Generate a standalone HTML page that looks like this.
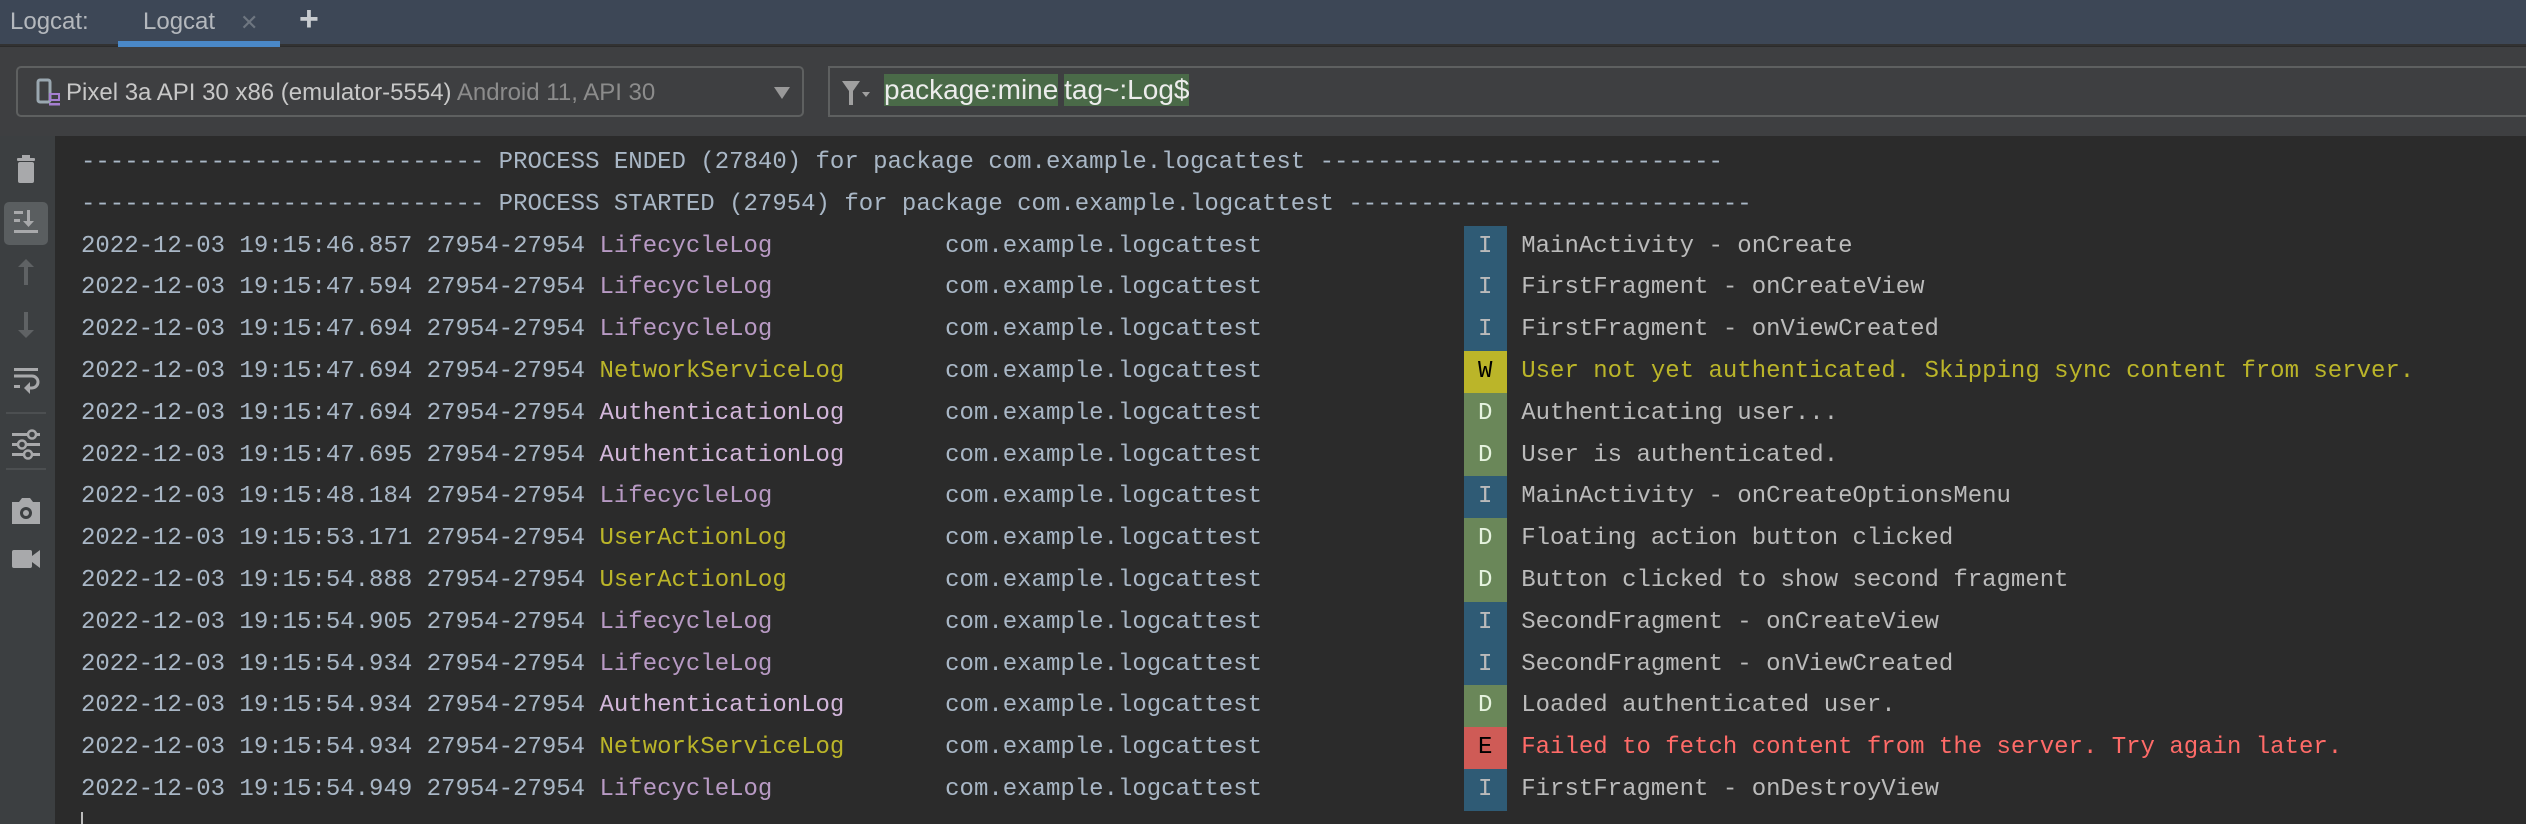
<!DOCTYPE html>
<html><head><meta charset="utf-8"><style>
*{margin:0;padding:0;box-sizing:border-box}
html,body{width:2526px;height:824px;overflow:hidden}
body{background:#2b2b2b;position:relative;font-family:"Liberation Sans",sans-serif}
.tabs{position:absolute;left:0;top:0;width:2526px;height:46px;background:#3d4756;border-bottom:2px solid #323232}
.t{position:absolute;top:8px;font-size:24px;color:#b4b8bd}
.ul{position:absolute;left:118px;top:41px;width:162px;height:6px;background:#4a88c7}
.tb{position:absolute;left:0;top:47px;width:2526px;height:89px;background:#3e3f41}
.combo{position:absolute;left:16px;top:66px;width:788px;height:51px;border:2px solid #5e6060;border-radius:5px}
.filter{position:absolute;left:828px;top:66px;width:1710px;height:51px;border:2px solid #5e6060}
.side{position:absolute;left:0;top:136px;width:55px;height:688px;background:#3c3f41}
.log{position:absolute;left:81px;top:142px;font-family:"Liberation Mono",monospace;font-size:24px;color:#a9b7c6}
.l{height:41.8px;line-height:41.8px;white-space:pre}
.b{display:inline-block;height:41.8px;color:#e6efe0;text-align:center}
.I{background:#2f5b75;color:#bbb}.W{background:#bbb529;color:#000}.D{background:#6a8759;color:#e6f3df}.E{background:#cf5b56;color:#000}
.lc{color:#b89ac4}.au{color:#d2b6da}.y{color:#bbb529}.m{color:#bbbbbb}.mw{color:#bbb529}.me{color:#ff6b68}
.hl{background:#4a6a48;display:inline-block;height:32px;line-height:32px}
</style></head><body>
<div class="tabs">
<span class="t" style="left:10px">Logcat:</span>
<span class="t" style="left:143px">Logcat</span>
<span class="t" style="left:240px;color:#6e7680;font-size:22px;top:10px">✕</span>
<span class="t" style="left:299px;font-size:34px;top:0px;color:#c8ccd0;font-weight:bold">+</span>
<div class="ul"></div>
</div>
<div class="tb"></div>
<div class="combo">
<svg style="position:absolute;left:18px;top:10px" width="26" height="30"><rect x="2" y="2" width="12" height="22" rx="2" fill="none" stroke="#9aa7b0" stroke-width="3"/><rect x="14" y="16" width="9" height="6" fill="none" stroke="#a57fd0" stroke-width="2"/><rect x="13" y="25" width="11" height="2.5" fill="#a57fd0"/></svg>
<span style="position:absolute;left:48px;top:11px;font-size:24px;color:#c8c8c8;white-space:nowrap">Pixel 3a API 30 x86 (emulator-5554) <span style="color:#8c8c8c">Android 11, API 30</span></span>
<svg style="position:absolute;left:756px;top:19px" width="16" height="12"><path d="M0 0H16L8 12Z" fill="#999"/></svg>
</div>
<div class="filter">
<svg style="position:absolute;left:10px;top:10px" width="36" height="30"><path d="M2 3H20L13 13V27H9V13Z" fill="#a0a0a0"/><path d="M22 14H30L26 19Z" fill="#a0a0a0"/></svg>
<span style="position:absolute;left:54px;top:6px;font-size:28px;color:#ececec;white-space:nowrap;word-spacing:-2px"><span class="hl">package:mine</span> <span class="hl">tag~:Log$</span></span>
</div>
<div class="side">
<svg width="55" height="688" fill="#a8a9ab">
<rect x="17" y="22" width="18" height="3" rx="1"/><rect x="22" y="19" width="8" height="3"/><rect x="18" y="26" width="16" height="21" rx="2"/>
<rect x="4" y="66" width="44" height="43" rx="5" fill="#5a5e60"/>
<rect x="14" y="75" width="9" height="3"/><rect x="14" y="83" width="6" height="3"/><rect x="14" y="94" width="24" height="3"/>
<path d="M27 74h3v11h4l-5.5 6-5.5-6h4z"/>
<path d="M26 123l-8 8h6v18h4v-18h6z" fill="#5f6264"/>
<path d="M26 202l-8-8h6v-18h4v18h6z" fill="#5f6264"/>
<rect x="14" y="232" width="24" height="3"/><rect x="14" y="249" width="6" height="3"/>
<path d="M14 240h18a6 6 0 0 1 0 12h-4" fill="none" stroke="#a8a9ab" stroke-width="3"/><path d="M30 246l-6 6 6 6z"/>
<rect x="6" y="276" width="40" height="2" fill="#4c4f51"/>
<rect x="12" y="297" width="28" height="3"/><rect x="12" y="307" width="28" height="3"/><rect x="12" y="317" width="28" height="3"/>
<circle cx="32" cy="298.5" r="4" fill="#3c3f41" stroke="#a8a9ab" stroke-width="2.5"/><circle cx="22" cy="308.5" r="4" fill="#3c3f41" stroke="#a8a9ab" stroke-width="2.5"/><circle cx="28" cy="318.5" r="4" fill="#3c3f41" stroke="#a8a9ab" stroke-width="2.5"/>
<rect x="6" y="332" width="40" height="2" fill="#4c4f51"/>
<path d="M12 366h7l3-4h8l3 4h7v22h-28z"/><circle cx="26" cy="377" r="6" fill="#3c3f41"/><circle cx="26" cy="377" r="3"/>
<rect x="12" y="414" width="20" height="18" rx="2"/><path d="M32 420l8-6v18l-8-6z"/>
</svg>
</div>
<div class="log"><div class="l">---------------------------- PROCESS ENDED (27840) for package com.example.logcattest ----------------------------</div><div class="l">---------------------------- PROCESS STARTED (27954) for package com.example.logcattest ----------------------------</div><div class="l">2022-12-03 19:15:46.857 27954-27954 <span class="lc">LifecycleLog            </span>com.example.logcattest              <span class="b I"> I </span> <span class="m">MainActivity - onCreate</span></div><div class="l">2022-12-03 19:15:47.594 27954-27954 <span class="lc">LifecycleLog            </span>com.example.logcattest              <span class="b I"> I </span> <span class="m">FirstFragment - onCreateView</span></div><div class="l">2022-12-03 19:15:47.694 27954-27954 <span class="lc">LifecycleLog            </span>com.example.logcattest              <span class="b I"> I </span> <span class="m">FirstFragment - onViewCreated</span></div><div class="l">2022-12-03 19:15:47.694 27954-27954 <span class="y">NetworkServiceLog       </span>com.example.logcattest              <span class="b W"> W </span> <span class="mw">User not yet authenticated. Skipping sync content from server.</span></div><div class="l">2022-12-03 19:15:47.694 27954-27954 <span class="au">AuthenticationLog       </span>com.example.logcattest              <span class="b D"> D </span> <span class="m">Authenticating user...</span></div><div class="l">2022-12-03 19:15:47.695 27954-27954 <span class="au">AuthenticationLog       </span>com.example.logcattest              <span class="b D"> D </span> <span class="m">User is authenticated.</span></div><div class="l">2022-12-03 19:15:48.184 27954-27954 <span class="lc">LifecycleLog            </span>com.example.logcattest              <span class="b I"> I </span> <span class="m">MainActivity - onCreateOptionsMenu</span></div><div class="l">2022-12-03 19:15:53.171 27954-27954 <span class="y">UserActionLog           </span>com.example.logcattest              <span class="b D"> D </span> <span class="m">Floating action button clicked</span></div><div class="l">2022-12-03 19:15:54.888 27954-27954 <span class="y">UserActionLog           </span>com.example.logcattest              <span class="b D"> D </span> <span class="m">Button clicked to show second fragment</span></div><div class="l">2022-12-03 19:15:54.905 27954-27954 <span class="lc">LifecycleLog            </span>com.example.logcattest              <span class="b I"> I </span> <span class="m">SecondFragment - onCreateView</span></div><div class="l">2022-12-03 19:15:54.934 27954-27954 <span class="lc">LifecycleLog            </span>com.example.logcattest              <span class="b I"> I </span> <span class="m">SecondFragment - onViewCreated</span></div><div class="l">2022-12-03 19:15:54.934 27954-27954 <span class="au">AuthenticationLog       </span>com.example.logcattest              <span class="b D"> D </span> <span class="m">Loaded authenticated user.</span></div><div class="l">2022-12-03 19:15:54.934 27954-27954 <span class="y">NetworkServiceLog       </span>com.example.logcattest              <span class="b E"> E </span> <span class="me">Failed to fetch content from the server. Try again later.</span></div><div class="l">2022-12-03 19:15:54.949 27954-27954 <span class="lc">LifecycleLog            </span>com.example.logcattest              <span class="b I"> I </span> <span class="m">FirstFragment - onDestroyView</span></div></div>
<div style="position:absolute;left:81px;top:812px;width:2px;height:12px;background:#bbb"></div>
</body></html>
